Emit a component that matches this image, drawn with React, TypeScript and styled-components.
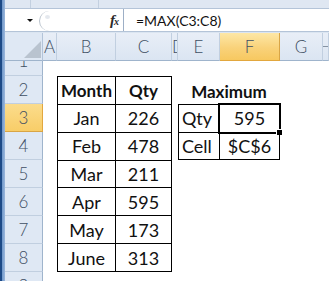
import * as React from 'react';
import styled, { createGlobalStyle } from 'styled-components';

const GlobalStyle = createGlobalStyle`
  html, body {
    margin: 0;
    padding: 0;
    background: #ffffff;
  }
  body {
    font-family: Lato, "Liberation Sans", sans-serif;
  }
`;

const Window = styled.div`
  width: 329px;
  height: 281px;
  overflow: hidden;
  display: flex;
  background: #dbe5f1;
`;

const Frame = styled.div`
  width: 5px;
  flex: none;
  background: linear-gradient(90deg, #1d4a86 0, #1d4a86 2px, #6f97c9 2px, #9bb7dc 5px);
`;

const Main = styled.div`
  width: 324px;
  flex: none;
  display: flex;
  flex-direction: column;
`;

const TopStrip = styled.div`
  flex: none;
  height: 9px;
  box-sizing: border-box;
  background: #dfe7f2;
  border-bottom: 1px solid #b4c4d8;
  display: flex;
`;

const StripDivider = styled.div<{ $w: number }>`
  width: ${(p) => p.$w}px;
  flex: none;
  border-right: 1px solid #c3d0e0;
`;

const FormulaBar = styled.div`
  flex: none;
  height: 22px;
  background: #ffffff;
  display: grid;
  grid-template-columns: 34px 84px 1fr;
  border-bottom: 1px solid #b4c4d8;
`;

const NameBox = styled.div`
  display: flex;
  align-items: center;
  justify-content: flex-end;
  padding-right: 6px;
`;

const DropArrow = styled.div`
  width: 0;
  height: 0;
  border-left: 3px solid transparent;
  border-right: 3px solid transparent;
  border-top: 3px solid #111;
`;

const FxArea = styled.div`
  margin-top: 2px;
  border-left: 1px solid #b9c2cc;
  border-radius: 11px 0 0 11px;
  position: relative;
  display: flex;
  align-items: center;
  justify-content: flex-end;
  padding-right: 5px;
`;

const Knob = styled.div`
  position: absolute;
  left: 5px;
  top: 4px;
  width: 5px;
  height: 4px;
  border-radius: 50%;
  background: #e4e8ee;
`;

const FxLabel = styled.span`
  font-family: "Liberation Serif", serif;
  font-style: italic;
  font-weight: bold;
  font-size: 15px;
  color: #2a2a2a;
  letter-spacing: -1px;
  margin-top: -2px;
`;

const FxSub = styled.span`
  font-size: 10px;
`;

const Formula = styled.div`
  border-left: 1px solid #9dafc6;
  padding-left: 12px;
  display: flex;
  align-items: center;
  font-size: 14px;
  color: #111;
`;

const Spacer = styled.div`
  flex: none;
  height: 1px;
  background: #dbe5f1;
`;

const Sheet = styled.div`
  flex: none;
  display: grid;
  grid-template-columns: 38px 14px 59px 56px 6px 42px 60px 43px 6px;
  grid-template-rows: 28px 15px repeat(8, 28px);
  background: #ffffff;
`;

const Corner = styled.div`
  grid-column: 1;
  grid-row: 1;
  background: #dfe8f4;
  border-right: 1px solid #b3c4d9;
  border-bottom: 1px solid #9fb4cc;
  position: relative;
  &::after {
    content: '';
    position: absolute;
    right: 1px;
    bottom: 2px;
    width: 0;
    height: 0;
    border-left: 17px solid transparent;
    border-bottom: 17px solid #b9c3cf;
  }
`;

const ColHeader = styled.div<{ $col: number; $active?: boolean; $clip?: boolean }>`
  grid-column: ${(p) => p.$col};
  grid-row: 1;
  overflow: hidden;
  display: flex;
  align-items: center;
  justify-content: ${(p) => (p.$clip ? 'flex-start' : 'center')};
  font-size: 17px;
  font-weight: 300;
  color: #3e4f63;
  border-right: 1px solid ${(p) => (p.$active ? '#d9a545' : '#c1cfe0')};
  border-bottom: 1px solid ${(p) => (p.$active ? '#e2a73e' : '#9fb4cc')};
  background: ${(p) =>
    p.$active
      ? 'linear-gradient(180deg, #fde7a6 0%, #f9d27a 55%, #f7c860 100%)'
      : 'linear-gradient(180deg, #e8eef7 0%, #dbe5f2 100%)'};
`;

const RowHeader = styled.div<{ $row: number; $active?: boolean; $clip?: boolean }>`
  grid-column: 1;
  grid-row: ${(p) => p.$row};
  overflow: hidden;
  display: flex;
  align-items: ${(p) => (p.$clip ? 'flex-end' : 'center')};
  justify-content: center;
  font-size: 17px;
  font-weight: 300;
  line-height: ${(p) => (p.$clip ? '28px' : 'normal')};
  color: #3e4f63;
  border-right: 1px solid ${(p) => (p.$active ? '#e2a73e' : '#9fb4cc')};
  border-bottom: 1px solid ${(p) => (p.$active ? '#d9a545' : '#c1cfe0')};
  background: ${(p) =>
    p.$active ? 'linear-gradient(180deg, #fbdc8c 0%, #f8cd68 100%)' : '#dfe8f4'};
`;

const Table = styled.div<{ $col: string; $row: string; $cols: string }>`
  grid-column: ${(p) => p.$col};
  grid-row: ${(p) => p.$row};
  display: grid;
  grid-template-columns: ${(p) => p.$cols};
  grid-auto-rows: 1fr;
  border-top: 1px solid #000;
  border-left: 1px solid #000;
`;

const Cell = styled.div<{ $left?: boolean; $bold?: boolean }>`
  position: relative;
  min-width: 0;
  border-right: 1px solid #000;
  border-bottom: 1px solid #000;
  display: flex;
  align-items: center;
  justify-content: ${(p) => (p.$left ? 'flex-start' : 'center')};
  padding-left: ${(p) => (p.$left ? '3px' : '0')};
  font-size: ${(p) => (p.$bold ? '17px' : '18px')};
  font-weight: ${(p) => (p.$bold ? 700 : 400)};
  color: #111;
`;

const Title = styled.div`
  grid-column: 6 / 8;
  grid-row: 3;
  display: flex;
  align-items: center;
  justify-content: center;
  padding-top: 2px;
  font-size: 17px;
  font-weight: 700;
  color: #111;
`;

const Selection = styled.div`
  position: absolute;
  left: -2px;
  top: -2px;
  right: -2px;
  bottom: -2px;
  border: 2px solid #000;
  pointer-events: none;
  &::after {
    content: '';
    position: absolute;
    right: -4px;
    bottom: -4px;
    width: 5px;
    height: 5px;
    background: #000;
    border: 1px solid #fff;
  }
`;

const columns = ['A', 'B', 'C', 'D', 'E', 'F', 'G', 'H'];

const data: [string, string][] = [
  ['Jan', '226'],
  ['Feb', '478'],
  ['Mar', '211'],
  ['Apr', '595'],
  ['May', '173'],
  ['June', '313'],
];

export default function App() {
  return (
    <>
      <GlobalStyle />
      <Window>
        <Frame />
        <Main>
          <TopStrip>
            <StripDivider $w={25} />
            <StripDivider $w={67} />
          </TopStrip>
          <FormulaBar>
            <NameBox>
              <DropArrow />
            </NameBox>
            <FxArea>
              <Knob />
              <FxLabel>
                f<FxSub>x</FxSub>
              </FxLabel>
            </FxArea>
            <Formula>=MAX(C3:C8)</Formula>
          </FormulaBar>
          <Spacer />
          <Sheet>
            <Corner />
            {columns.map((c, i) => (
              <ColHeader key={c} $col={i + 2} $active={c === 'F'} $clip={c === 'D'}>
                {c}
              </ColHeader>
            ))}
            <RowHeader $row={2} $clip>
              1
            </RowHeader>
            {[2, 3, 4, 5, 6, 7, 8, 9].map((r) => (
              <RowHeader key={r} $row={r + 1} $active={r === 3}>
                {r}
              </RowHeader>
            ))}

            <Table $col="3 / 5" $row="3 / 10" $cols="58px 1fr">
              <Cell $bold>Month</Cell>
              <Cell $bold>Qty</Cell>
              {data.map(([m, q]) => (
                <React.Fragment key={m}>
                  <Cell>{m}</Cell>
                  <Cell>{q}</Cell>
                </React.Fragment>
              ))}
            </Table>

            <Title>Maximum</Title>
            <Table $col="6 / 8" $row="4 / 6" $cols="41px 1fr">
              <Cell $left>Qty</Cell>
              <Cell>
                595
                <Selection />
              </Cell>
              <Cell $left>Cell</Cell>
              <Cell>$C$6</Cell>
            </Table>
          </Sheet>
        </Main>
      </Window>
    </>
  );
}
